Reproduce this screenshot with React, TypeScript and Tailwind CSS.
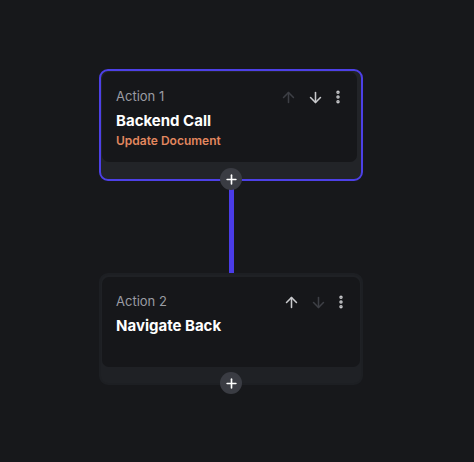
import React from "react";
import { ArrowUp, ArrowDown, EllipsisVertical, Plus } from "lucide-react";

type ActionProps = {
  index: number;
  title: string;
  subtitle?: string;
  active?: boolean;
  canUp: boolean;
  canDown: boolean;
};

const AddButton = () => (
  <button className="absolute left-1/2 bottom-0 z-10 flex h-[22px] w-[22px] -translate-x-1/2 translate-y-1/2 items-center justify-center rounded-full bg-[#3a3c43] text-white">
    <Plus className="h-[15px] w-[15px]" strokeWidth={2.6} />
  </button>
);

const ActionCard = ({ index, title, subtitle, active, canUp, canDown }: ActionProps) => (
  <div
    className={
      active
        ? "relative h-[112px] w-[264px] rounded-[9px] border-2 border-[#4d40e6] bg-[#222428] pt-px pl-px pr-[4px]"
        : "relative h-[112px] w-[264px] rounded-[9px] border-2 border-[#1d1f23] bg-[#1f2125] pt-[2px] pl-px pr-[1px]"
    }
  >
    <div className="h-[90px] rounded-[7px] bg-[#16171a] pl-[14px] pr-[14px] pt-[15px]">
      <div className="flex h-[20px] items-center justify-between">
        <span className="text-[13px] text-[#9a9ca3]">Action {index}</span>
        <div className="mr-[-3px] flex items-center">
          <ArrowUp className={canUp ? "h-[17px] w-[17px] text-[#c9cacd]" : "h-[17px] w-[17px] text-[#3d3f45]"} strokeWidth={2.2} />
          <ArrowDown className={canDown ? "ml-[10px] h-[17px] w-[17px] text-[#c9cacd]" : "ml-[10px] h-[17px] w-[17px] text-[#3d3f45]"} strokeWidth={2.2} />
          <EllipsisVertical className="ml-[6px] h-[16px] w-[16px] text-[#c9cacd]" strokeWidth={3.2} />
        </div>
      </div>
      <div className="mt-[4px] text-[15px] font-bold leading-[19px] text-white">{title}</div>
      {subtitle && (
        <div className="mt-[3px] text-[12px] font-semibold leading-[16px] text-[#e2875f]">{subtitle}</div>
      )}
    </div>
    <AddButton />
  </div>
);

export default function App() {
  return (
    <div
      className="h-[462px] w-[474px] bg-[#17181b] pl-[99px] pt-[69px]"
      style={{ fontFamily: "Inter, 'Open Sans', sans-serif" }}
    >
      <div className="flex w-[264px] flex-col items-center">
        <ActionCard index={1} title="Backend Call" subtitle="Update Document" active canUp={false} canDown />
        <div className="h-[92px] w-[5px] bg-[#4a3ce8]" />
        <ActionCard index={2} title="Navigate Back" canUp canDown={false} />
      </div>
    </div>
  );
}
